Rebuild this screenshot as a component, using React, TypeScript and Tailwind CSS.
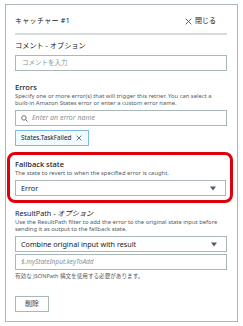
import React from "react";

const font = { fontFamily: '"Noto Sans", "Noto Sans CJK JP", sans-serif' };

function Caret() {
  return (
    <svg width="6" height="5" viewBox="0 0 6 5" className="shrink-0">
      <path d="M0 0.5h6L3 4.5z" fill="#545b64" />
    </svg>
  );
}

function Cross({ size = 7 }: { size?: number }) {
  return (
    <svg width={size} height={size} viewBox="0 0 10 10" className="shrink-0">
      <path d="M1 1l8 8M9 1l-8 8" stroke="#545b64" strokeWidth="1.4" />
    </svg>
  );
}

function Select({ value }: { value: string }) {
  return (
    <div className="flex h-[16px] items-center justify-between border border-[#aab7b8] bg-white pl-[5px] pr-[9px] text-[7.2px] text-[#16191f]">
      <span>{value}</span>
      <Caret />
    </div>
  );
}

export default function App() {
  return (
    <div className="h-[326px] w-[243px] bg-white pl-[5px] pt-[4px]" style={font}>
      <div className="h-[318px] w-[233px] border border-[#aab7b8] pl-[9px] pr-[10px]">
        <div className="mt-[8px] flex h-[16px] items-center justify-between text-[7px] text-[#16191f]">
          <span className="tracking-[0.3px]">キャッチャー #1</span>
          <span className="mr-[11px] flex items-center gap-[3px]">
            <Cross size={7} />
            閉じる
          </span>
        </div>
        <div className="mt-[4px] h-[2px] bg-[#d5dbdb]" />

        <div className="mt-[5px] text-[7.2px] leading-[10px] text-[#16191f]">コメント - オプション</div>
        <div className="mt-[5px] flex h-[16px] items-center border border-[#aab7b8] pl-[6px] text-[6.5px] text-[#879596]">
          コメントを入力
        </div>

        <div className="mt-[11px] text-[7.5px] font-medium leading-[10px] text-[#16191f]">Errors</div>
        <div className="mt-[1px] text-[5.85px] leading-[7px] text-[#545b64]">
          Specify one or more error(s) that will trigger this retrier. You can select a built-in Amazon States error or enter a custom error name.
        </div>
        <div className="mt-[3px] flex h-[16px] items-center gap-[4px] border border-[#aab7b8] pl-[5px] text-[7px] italic text-[#879596]">
          <svg width="7" height="7" viewBox="0 0 10 10">
            <circle cx="4.2" cy="4.2" r="3.2" fill="none" stroke="#545b64" strokeWidth="1.2" />
            <path d="M6.6 6.6L9.2 9.2" stroke="#545b64" strokeWidth="1.3" />
          </svg>
          Enter an error name
        </div>
        <div className="mt-[4px] flex h-[16px] w-fit items-center gap-[5px] border border-[#7fb8dd] bg-[#f1faff] pl-[5px] pr-[6px] text-[6.4px] text-[#16191f]">
          States.TaskFailed
          <Cross size={6} />
        </div>

        <div className="mt-[6px] -ml-[8px] -mr-[6px] rounded-[8px] border-[3px] border-[#e0000c] pb-[4px] pl-[5px] pr-[4px] pt-[4px]">
          <div className="text-[7.5px] font-medium leading-[10px] text-[#16191f]">Fallback state</div>
          <div className="mt-[1px] text-[5.85px] leading-[7px] text-[#545b64]">
            The state to revert to when the specified error is caught.
          </div>
          <div className="mt-[3px]">
            <Select value="Error" />
          </div>
        </div>

        <div className="mt-[5px] text-[7.2px] leading-[10px] text-[#16191f]">
          ResultPath - <span className="italic">オプション</span>
        </div>
        <div className="mt-[1px] text-[5.85px] leading-[7px] text-[#545b64]">
          Use the ResultPath filter to add the error to the original state input before sending it as output to the fallback state.
        </div>
        <div className="mt-[3px]">
          <Select value="Combine original input with result" />
        </div>
        <div className="mt-[2px] flex h-[16px] items-center border border-[#aab7b8] pl-[5px] text-[6.5px] italic text-[#879596]">
          $.myStateInput.keyToAdd
        </div>
        <div className="mt-[3px] text-[5.6px] leading-[7px] text-[#545b64]">
          有効な JSONPath 構文を使用する必要があります。
        </div>

        <div className="mt-[16px] flex h-[16px] w-[34px] items-center justify-center border border-[#aab7b8] text-[7px] font-medium text-[#545b64]">
          削除
        </div>
      </div>
    </div>
  );
}
